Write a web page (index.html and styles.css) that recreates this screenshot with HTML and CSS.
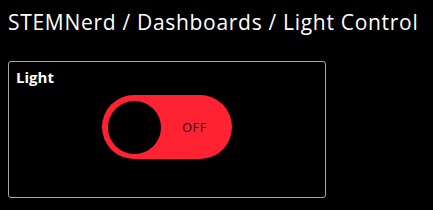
FILE: index.html
```html
<!DOCTYPE HTML>
<html lang="en">
  <head>
    <title>Light Control</title>
    <meta charset="utf-8">
    <link rel="stylesheet" href="styles.css">
  </head>
  <body>

  <div id="title">STEMNerd / Dashboards / Light Control</div>

  <div class="card">
    <div class="card-label">Light</div>
    <div class="switch-row">
      <div class="switch">
        <span class="knob"></span>
        <span class="state">OFF</span>
      </div>
    </div>
  </div>

  </body>
</html>
```

FILE: styles.css
```css
html {
  height: 100%;
}
body {
  margin: 0;
  padding: 0 8px;
  background: #000000;
  color: #ffffff;
  font-family: "Open Sans", "Liberation Sans", sans-serif;
  height: 100%;
}

#title {
  font-size: 21px;
  line-height: 26px;
  letter-spacing: 0.7px;
  padding-top: 9px;
  height: 61px;
  box-sizing: border-box;
  white-space: nowrap;
}

.card {
  width: 318px;
  height: 137px;
  box-sizing: border-box;
  border: 1px solid #aaaaaa;
  border-radius: 3px;
  padding: 6px 7px;
}

.card-label {
  font-weight: bold;
  font-size: 15px;
  line-height: 18px;
}

.switch-row {
  display: flex;
  justify-content: center;
  padding-top: 9px;
}

.switch {
  width: 130px;
  height: 64px;
  border-radius: 32px;
  background: #ff2233;
  display: flex;
  align-items: center;
  padding: 0 6px;
  box-sizing: border-box;
  flex-shrink: 0;
}

.knob {
  width: 53px;
  height: 53px;
  border-radius: 50%;
  background: #000000;
  flex-shrink: 0;
}

.state {
  flex: 1;
  text-align: center;
  font-size: 12.5px;
  color: #1a0508;
  letter-spacing: 0.6px;
  padding-left: 2px;
}
```
